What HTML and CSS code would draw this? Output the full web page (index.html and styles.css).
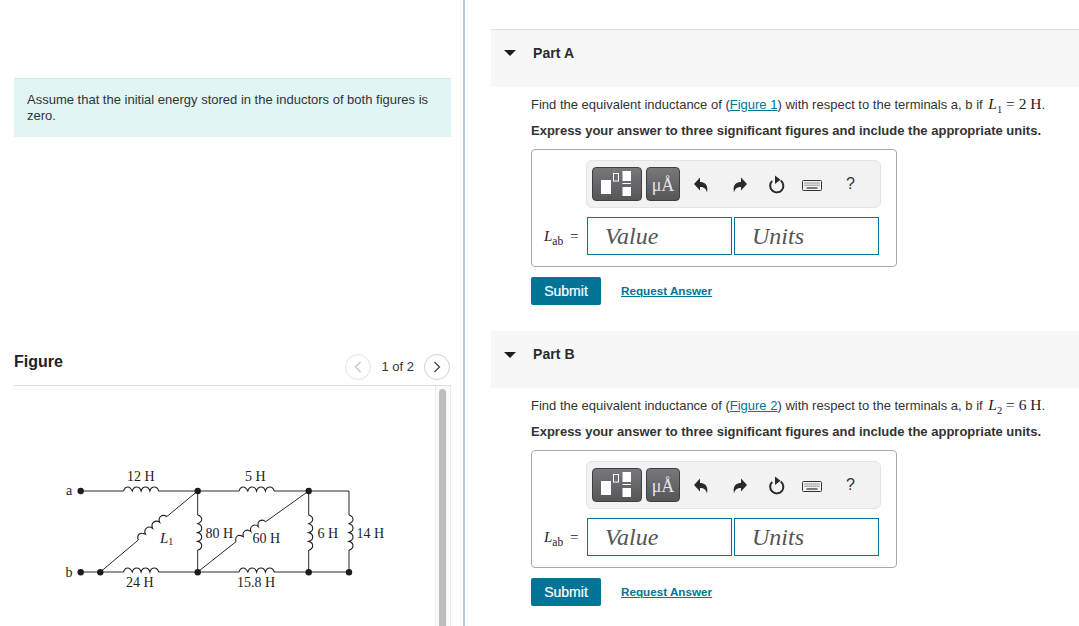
FILE: index.html
```html
<!DOCTYPE html>
<html lang="en">
<head>
<meta charset="utf-8">
<title>Equivalent inductance</title>
<link rel="stylesheet" href="styles.css">
</head>
<body>
<div class="page">
  <aside class="left">
    <div class="note">Assume that the initial energy stored in the inductors of both figures is zero.</div>
    <div class="figure-head">
      <h2 class="figure-title">Figure</h2>
      <div class="pager">
        <span class="pager-btn pager-off"><svg width="8" height="12" viewBox="0 0 8 12"><path d="M6.5 1 1.5 6l5 5" fill="none" stroke="#c4c4c4" stroke-width="1.4"/></svg></span>
        <span class="pager-text">1 of 2</span>
        <span class="pager-btn"><svg width="8" height="12" viewBox="0 0 8 12"><path d="M1.5 1l5 5-5 5" fill="none" stroke="#444" stroke-width="1.3"/></svg></span>
      </div>
    </div>
    <div class="figure-body">
      <svg class="circuit" width="421" height="240" viewBox="14 386 421 240">
        <defs>
          <path id="coil" d="M0 0c1-3.2 3.2-4 4.4-4 2 0 3.3 2 4.4 4 .6-2.2 2.2-4 4.4-4s3.8 1.800 4.4 4c.6-2.200 2.200-4 4.400-4s3.800 1.800 4.400 4c.6-2.200 2.200-4 4.400-4 1.500 0 3.500 1 4.400 4" fill="none" stroke="#222" stroke-width="1.1"/>
        </defs>
        <g class="wire">
          <path d="M81 491H123.5M158.5 491H239M274 491H349V515M349 550V572H81"/>
          <path d="M197.7 491V515M197.7 550V572M308.7 491V515M308.7 550V572"/>
          <path d="M100.3 572 138.3 540M166.7 516.7 197.7 491M197.7 572 236 541.7M265.7 521.7 308.7 491"/>
          <path class="wire-gap" d="M123.5 572H158.5M239 572H274"/>
        </g>
        <use href="#coil" transform="translate(123.5 491)"/>
        <use href="#coil" transform="translate(239 491)"/>
        <use href="#coil" transform="translate(123.5 572)"/>
        <use href="#coil" transform="translate(239 572)"/>
        <use href="#coil" transform="translate(138.3 540) rotate(-39.4) scale(1.05 1)"/>
        <use href="#coil" transform="translate(236 541.7) rotate(-34) scale(1.02 1)"/>
        <use href="#coil" transform="translate(197.7 515) rotate(90)"/>
        <use href="#coil" transform="translate(308.7 515) rotate(90)"/>
        <use href="#coil" transform="translate(349 515) rotate(90)"/>
        <g class="dots">
          <circle cx="80.7" cy="491" r="3.2"/><circle cx="197.7" cy="491" r="3.2"/><circle cx="308.7" cy="491" r="3.2"/>
          <circle cx="80.7" cy="572.3" r="3.2"/><circle cx="100.3" cy="572.3" r="3.2"/><circle cx="197.7" cy="572.3" r="3.2"/><circle cx="308.7" cy="572.3" r="3.2"/><circle cx="349" cy="572.3" r="3.2"/>
        </g>
        <g class="labels">
          <text x="66" y="495">a</text>
          <text x="65.500" y="577">b</text>
          <text x="127" y="481">12 H</text>
          <text x="245" y="481">5 H</text>
          <text x="126" y="587">24 H</text>
          <text x="237" y="587">15.8 H</text>
          <text x="205.5" y="538">80 H</text>
          <text x="252.500" y="543">60 H</text>
          <text x="317.5" y="538">6 H</text>
          <text x="356.5" y="538">14 H</text>
          <text x="160" y="543" class="italic">L<tspan class="sub" dy="2">1</tspan></text>
        </g>
      </svg>
      <div class="scrollbar"><div class="thumb"></div></div>
    </div>
  </aside>

  <main class="right">
    <section class="part">
      <header class="part-head"><span class="caret"></span><h3 class="part-title">Part A</h3></header>
      <div class="part-body">
        <p class="prompt">Find the equivalent inductance of (<a class="fig-link" href="#">Figure 1</a>) with respect to the terminals a, b if <span class="math"><i>L</i><sub>1</sub> = 2 H</span>.</p>
        <p class="prompt-strong">Express your answer to three significant figures and include the appropriate units.</p>
        <div class="answer">
          <div class="toolbar">
            <span class="tool-btn tool-wide"><svg width="32" height="26" viewBox="0 0 32 26"><rect x="0" y="9" width="10" height="14" fill="#fff"/><rect x="12.5" y="2.5" width="5" height="7.5" fill="none" stroke="#fff"/><rect x="21.5" y="0" width="8.5" height="10" fill="#fff"/><rect x="21.5" y="12" width="8.5" height="1" fill="#fff"/><rect x="21.5" y="16" width="8.5" height="9" fill="#fff"/></svg></span>
            <span class="tool-btn tool-unit">μÅ</span>
            <span class="tool-icon tool-undo"><svg width="14" height="16" viewBox="0 0 14 16"><path d="M0 7 6 .500v4.500c5 0 8.500 3 7 10.500C12 11.500 10 10 6 10v3.500Z" fill="#2a2a2a"/></svg></span>
            <span class="tool-icon tool-redo"><svg width="14" height="16" viewBox="0 0 14 16"><path d="M14 7 8 .500v4.500c-5 0-8.500 3-7 10.500C2 11.500 4 10 8 10v3.500Z" fill="#2a2a2a"/></svg></span>
            <span class="tool-icon tool-reset"><svg width="18" height="20" viewBox="0 0 18 20"><path d="M5.200 6a6.600 6.600 0 1 0 8.500-.5" fill="none" stroke="#2a2a2a" stroke-width="2"/><path d="M8 .500 13.500 4.700 8 9Z" fill="#2a2a2a"/></svg></span>
            <span class="tool-icon tool-keys"><svg width="20" height="11" viewBox="0 0 20 11"><rect x=".5" y=".5" width="19" height="10" rx="1" fill="#f2f2f2" stroke="#333"/><path d="M2.500 3h15M2.500 5.200h15" stroke="#555" stroke-dasharray="1.200 .8"/><path d="M4.500 8h11" stroke="#444" stroke-width="1.400"/></svg></span>
            <span class="tool-help">?</span>
          </div>
          <div class="answer-row">
            <span class="math answer-label"><i>L</i><sub>ab</sub> =</span>
            <span class="field">Value</span>
            <span class="field">Units</span>
          </div>
        </div>
        <div class="actions"><a class="submit" href="#">Submit</a><a class="request" href="#">Request Answer</a></div>
      </div>
    </section>

    <section class="part part-b">
      <header class="part-head"><span class="caret"></span><h3 class="part-title">Part B</h3></header>
      <div class="part-body">
        <p class="prompt">Find the equivalent inductance of (<a class="fig-link" href="#">Figure 2</a>) with respect to the terminals a, b if <span class="math"><i>L</i><sub>2</sub> = 6 H</span>.</p>
        <p class="prompt-strong">Express your answer to three significant figures and include the appropriate units.</p>
        <div class="answer">
          <div class="toolbar">
            <span class="tool-btn tool-wide"><svg width="32" height="26" viewBox="0 0 32 26"><rect x="0" y="9" width="10" height="14" fill="#fff"/><rect x="12.5" y="2.5" width="5" height="7.5" fill="none" stroke="#fff"/><rect x="21.5" y="0" width="8.5" height="10" fill="#fff"/><rect x="21.5" y="12" width="8.5" height="1" fill="#fff"/><rect x="21.5" y="16" width="8.5" height="9" fill="#fff"/></svg></span>
            <span class="tool-btn tool-unit">μÅ</span>
            <span class="tool-icon tool-undo"><svg width="14" height="16" viewBox="0 0 14 16"><path d="M0 7 6 .500v4.500c5 0 8.500 3 7 10.500C12 11.500 10 10 6 10v3.500Z" fill="#2a2a2a"/></svg></span>
            <span class="tool-icon tool-redo"><svg width="14" height="16" viewBox="0 0 14 16"><path d="M14 7 8 .500v4.500c-5 0-8.500 3-7 10.500C2 11.500 4 10 8 10v3.500Z" fill="#2a2a2a"/></svg></span>
            <span class="tool-icon tool-reset"><svg width="18" height="20" viewBox="0 0 18 20"><path d="M5.200 6a6.600 6.600 0 1 0 8.500-.5" fill="none" stroke="#2a2a2a" stroke-width="2"/><path d="M8 .500 13.500 4.700 8 9Z" fill="#2a2a2a"/></svg></span>
            <span class="tool-icon tool-keys"><svg width="20" height="11" viewBox="0 0 20 11"><rect x=".5" y=".5" width="19" height="10" rx="1" fill="#f2f2f2" stroke="#333"/><path d="M2.500 3h15M2.500 5.200h15" stroke="#555" stroke-dasharray="1.200 .8"/><path d="M4.500 8h11" stroke="#444" stroke-width="1.400"/></svg></span>
            <span class="tool-help">?</span>
          </div>
          <div class="answer-row">
            <span class="math answer-label"><i>L</i><sub>ab</sub> =</span>
            <span class="field">Value</span>
            <span class="field">Units</span>
          </div>
        </div>
        <div class="actions"><a class="submit" href="#">Submit</a><a class="request" href="#">Request Answer</a></div>
      </div>
    </section>
  </main>
</div>
</body>
</html>
```
FILE: styles.css
```css
* { box-sizing: border-box; }
html, body { margin: 0; height: 100%; overflow: hidden; background: #fff; }
body { font-family: "Liberation Sans", Arial, sans-serif; color: #333; font-size: 13px; }
.page { display: flex; width: 1079px; height: 626px; overflow: hidden; }

.left { width: 465px; flex: none; height: 626px; padding: 78px 12px 0 14px; border-right: 2px solid #b7cfe4; display: flex; flex-direction: column; }
.note { height: 59px; padding: 13px 13px 0; background: #e1f5f4; border-top: 1px solid #d5e6e5; line-height: 15.5px; font-size: 13px; color: #333; }
.figure-head { display: flex; justify-content: space-between; margin-top: 214px; height: 35px; border-bottom: 1px solid #d9dde1; }
.figure-title { margin: 1px 0 0; font-size: 16px; line-height: 20px; font-weight: 700; color: #222; }
.pager { display: flex; align-items: center; height: 27px; margin: 2px 1px 0 0; }
.pager-btn { width: 26px; height: 26px; border: 1px solid #ccd2d8; border-radius: 50%; display: flex; align-items: center; justify-content: center; }
.pager-off { border-color: #e4e4e4; }
.pager-text { margin: 0 10px; font-size: 13px; color: #333; }
.figure-body { display: flex; flex: 1; min-height: 0; overflow: hidden; }
.circuit { display: block; flex: none; }
.wire path { fill: none; stroke: #2a2a2a; stroke-width: 1; }
.wire .wire-gap { stroke: #fff; stroke-width: 3; }
.dots circle { fill: #1c1c1c; }
.labels text { font-family: "Liberation Serif", "Times New Roman", serif; font-size: 14px; fill: #222; }
.labels .italic { font-style: italic; font-size: 15px; }
.labels .sub { font-size: 10px; font-style: normal; }
.scrollbar { flex: 1; padding: 3px 4px 0 3px; border-left: 1px solid #ececec; border-right: 1px solid #ececec; background: #fafafa; }
.thumb { height: 100%; border-radius: 4px 4px 0 0; background: #bdbdbd; }

.right { flex: 1; min-width: 0; padding: 29px 0 0 26px; }
.part-b { margin-top: 26px; }
.part-head { height: 58px; background: #f7f7f7; border-top: 1px solid #dedede; display: flex; padding-left: 13px; }
.part-b .part-head { height: 57px; border-top-color: #f7f7f7; }
.part-b .part-title { margin-top: 14px; }
.caret { width: 0; height: 0; margin-top: 20px; border-left: 6px solid transparent; border-right: 6px solid transparent; border-top: 6px solid #1e1e1e; }
.part-title { margin: 15px 0 0 17px; font-size: 14px; line-height: 17px; font-weight: 700; color: #2b2b2b; letter-spacing: 0.1px; }
.part-body { padding: 0 0 0 40px; }
.prompt { margin: 8px 0 0; height: 18px; line-height: 18px; font-size: 13px; color: #333; white-space: nowrap; }
.prompt-strong { margin: 9px 0 0; line-height: 18px; font-size: 13px; font-weight: 700; color: #333; white-space: nowrap; }
.fig-link { color: #007595; text-decoration: underline; }
.math { font-family: "Liberation Serif", "Times New Roman", serif; font-size: 15.500px; color: #222; letter-spacing: 0; margin-left: 2px; }
.math sub { font-size: 10.500px; line-height: 0; }

.answer { width: 366px; height: 118px; margin-top: 9px; border: 1px solid #a9a9a9; border-radius: 4px; padding: 10px 0 0 54px; }
.toolbar { width: 295px; height: 48px; background: #f2f2f2; border: 1px solid #e3e3e3; border-radius: 6px; display: flex; align-items: center; padding-left: 5px; }
.tool-btn { height: 34px; display: flex; align-items: center; justify-content: center; background: linear-gradient(#77777c, #55555a); border: 1px solid #3f3f42; border-radius: 4px; }
.tool-wide { width: 50px; }
.tool-unit { width: 34px; margin-left: 4px; padding-top: 3px; font-family: "Liberation Serif", "Times New Roman", serif; font-size: 18px; color: #e6e6e6; }
.tool-icon { display: flex; align-items: center; justify-content: center; }
.tool-undo { margin: 1px 0 0 14px; }
.tool-redo { margin: 1px 0 0 25px; }
.tool-reset { margin: 1px 0 0 20px; }
.tool-keys { margin: 3px 0 0 17px; }
.tool-help { margin-left: 24px; font-size: 16px; color: #333; }
.answer-row { display: flex; align-items: center; margin-top: 9px; margin-left: -43px; }
.answer-label { width: 44px; margin-left: 1px; margin-right: -1px; font-size: 15px; white-space: nowrap; }
.answer-label sub { font-size: 11.500px; margin-right: 3px; }
.field { width: 145px; height: 38px; border: 1px solid #00739a; margin-right: 2px; padding-left: 17px; line-height: 36px; font-family: "Liberation Serif", "Times New Roman", serif; font-style: italic; font-size: 24px; color: #555; }
.actions { display: flex; align-items: center; margin-top: 10px; }
.submit { width: 70px; height: 28px; background: #007595; color: #fff; border-radius: 2px; font-size: 14px; font-weight: 400; line-height: 28px; text-align: center; text-decoration: none; -webkit-text-stroke: 0.2px #fff; }
.request { margin: -2px 0 0 20px; color: #007595; font-size: 11.700px; font-weight: 700; text-decoration: underline; }
```
